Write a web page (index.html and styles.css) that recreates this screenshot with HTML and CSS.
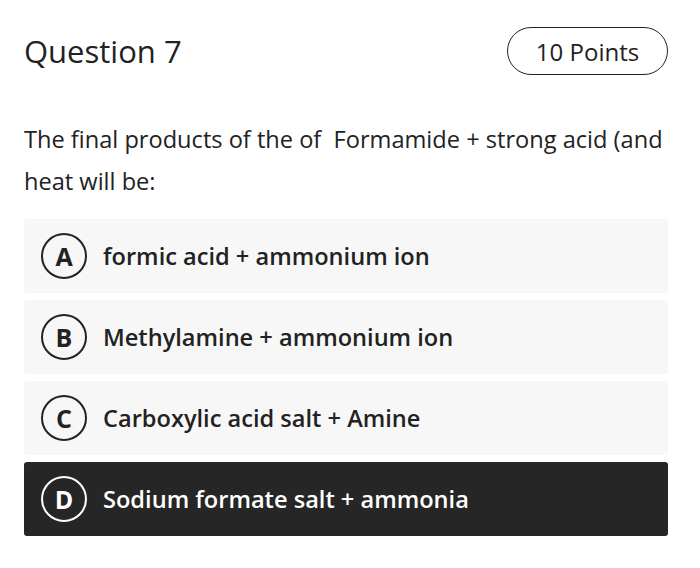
FILE: index.html
```html
<!DOCTYPE html>
<html lang="en">
<head>
<meta charset="utf-8">
<title>Question 7</title>
<link rel="stylesheet" href="styles.css">
</head>
<body>
<main class="quiz">
  <header class="quiz-header">
    <h1 class="quiz-title">Question 7</h1>
    <span class="points">10 Points</span>
  </header>
  <p class="prompt">The final products of the of&nbsp; Formamide + strong acid (and heat will be:</p>
  <ul class="options">
    <li class="option"><span class="letter">A</span><span class="label">formic acid + ammonium ion</span></li>
    <li class="option"><span class="letter">B</span><span class="label">Methylamine + ammonium ion</span></li>
    <li class="option"><span class="letter">C</span><span class="label">Carboxylic acid salt + Amine</span></li>
    <li class="option selected"><span class="letter">D</span><span class="label">Sodium formate salt + ammonia</span></li>
  </ul>
</main>
</body>
</html>
```

FILE: styles.css
```css
* { box-sizing: border-box; }
html, body { margin: 0; padding: 0; background: #fff; }
body {
  font-family: "Open Sans", "Noto Sans", "Liberation Sans", sans-serif;
  color: #222;
}
.quiz { padding: 27px 32px 0 24px; }
.quiz-header {
  display: flex;
  justify-content: space-between;
  align-items: center;
}
.quiz-title {
  margin: 0;
  font-size: 31px;
  font-weight: 500;
  line-height: 40px;
}
.points {
  display: flex;
  align-items: center;
  justify-content: center;
  width: 161px;
  height: 48px;
  border: 1.5px solid #222;
  border-radius: 24px;
  font-size: 24px;
  font-weight: 500;
}
.prompt {
  margin: 43px 0 17px;
  font-size: 23.6px;
  line-height: 42px;
  font-weight: 400;
}
.options {
  list-style: none;
  margin: 0;
  padding: 0;
  display: flex;
  flex-direction: column;
  gap: 7px;
}
.option {
  display: flex;
  align-items: center;
  gap: 16px;
  height: 74px;
  padding-left: 17px;
  background: #f7f7f7;
  border-radius: 3px;
}
.letter {
  display: flex;
  align-items: center;
  justify-content: center;
  width: 46px;
  height: 46px;
  border: 2.5px solid #222;
  border-radius: 50%;
  font-size: 25px;
  font-weight: 700;
}
.label {
  font-size: 23.6px;
  font-weight: 600;
}
.option.selected {
  background: #262626;
  color: #fff;
}
.option.selected .letter { border-color: #fff; }
```
